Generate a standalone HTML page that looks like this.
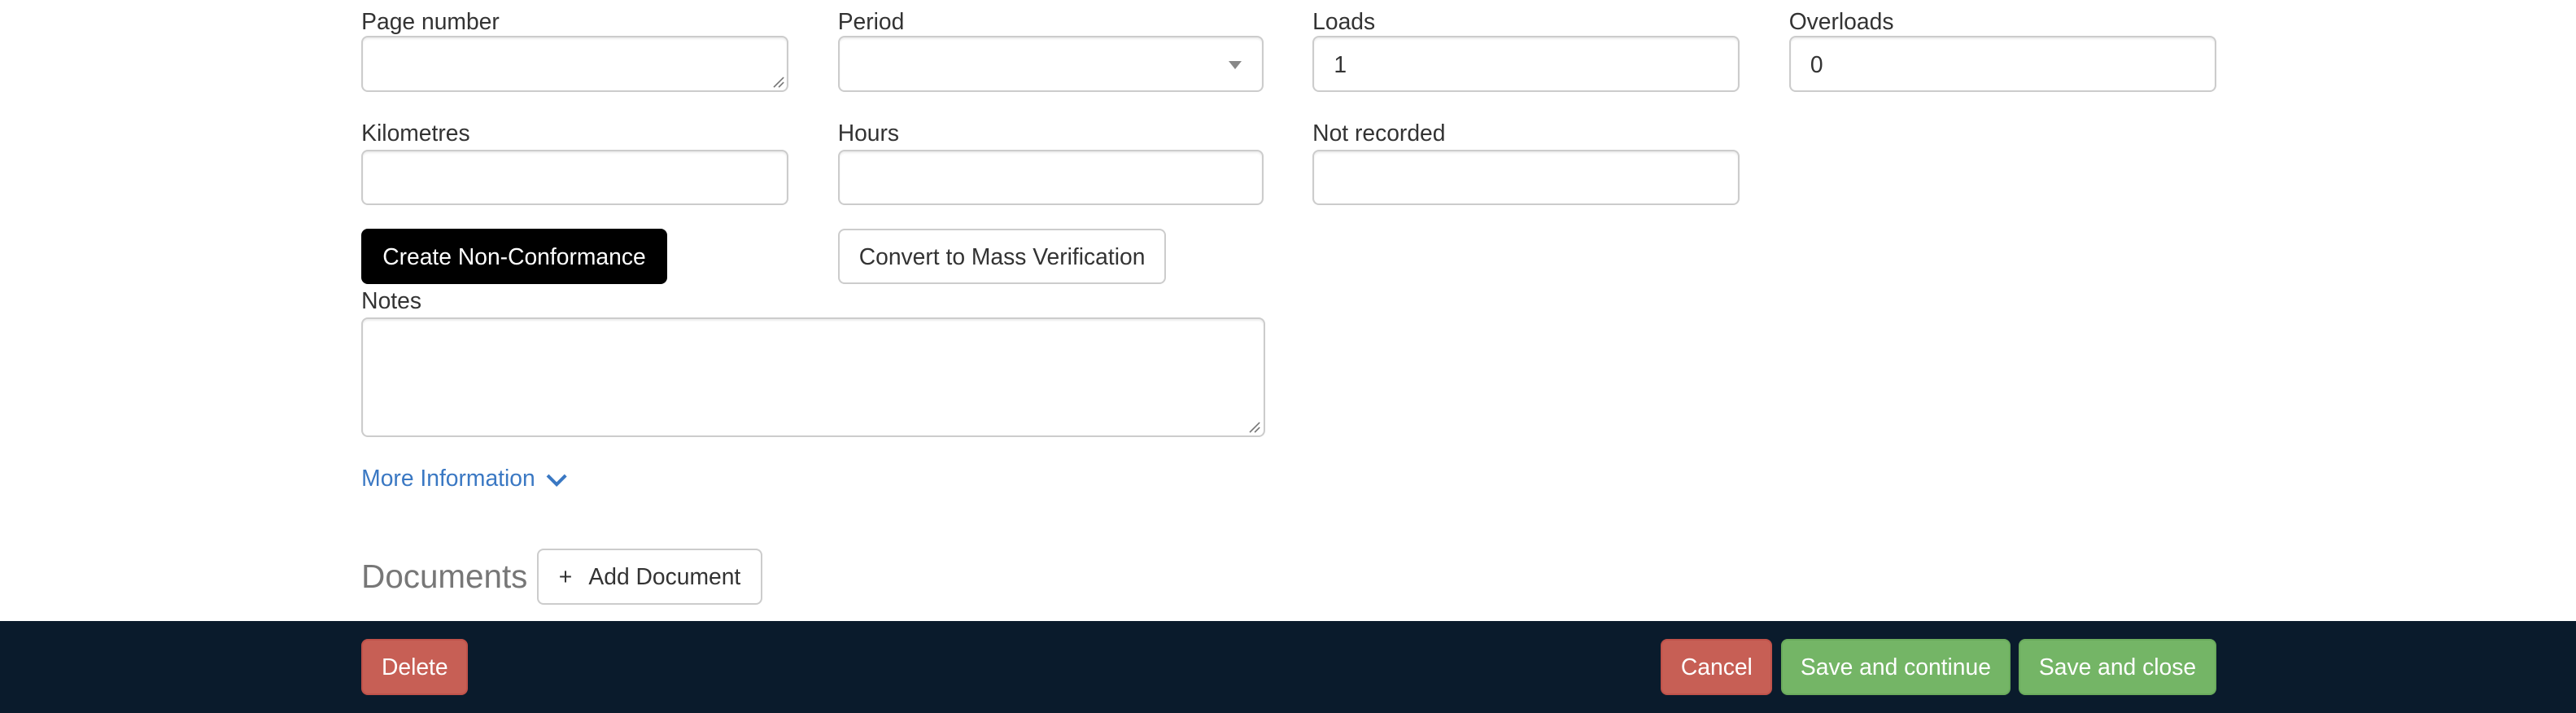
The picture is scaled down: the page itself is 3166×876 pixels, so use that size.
<!DOCTYPE html>
<html><head><meta charset="utf-8"><style>
html,body{margin:0;padding:0;background:#fff;}
body{zoom:2.019;width:1568px;height:434px;position:relative;overflow:hidden;font-family:"Liberation Sans",Arial,sans-serif;font-size:14px;color:#333;}
.a{position:absolute;}
.lbl{position:absolute;font-size:14px;line-height:16px;color:#333;}
.inp{position:absolute;box-sizing:border-box;border:1px solid #ccc;border-radius:4px;background:#fff;box-shadow:inset 0 1px 1px rgba(0,0,0,.075);width:260px;height:34px;padding:8px 12px;font-size:14px;line-height:16px;}
.btn{position:absolute;box-sizing:border-box;border-radius:4px;height:34px;line-height:32px;text-align:center;font-size:14px;}
</style></head><body>
<div class="lbl" style="left:220px;top:5px">Page number</div>
<div class="inp" style="left:220px;top:22px">
<svg class="a" style="right:1px;bottom:1px" width="8" height="8"><path d="M7 1L1 7M7 4L4 7" stroke="#777" stroke-width="0.8"/></svg></div>
<div class="lbl" style="left:510px;top:5px">Period</div>
<div class="inp" style="left:510px;top:22px;width:259px"><div class="a" style="right:12px;top:14px;width:0;height:0;border-left:4px solid transparent;border-right:4px solid transparent;border-top:5px solid #888"></div></div>
<div class="lbl" style="left:799px;top:5px">Loads</div>
<div class="inp" style="left:799px;top:22px">1</div>
<div class="lbl" style="left:1089px;top:5px">Overloads</div>
<div class="inp" style="left:1089px;top:22px">0</div>

<div class="lbl" style="left:220px;top:73px">Kilometres</div>
<div class="inp" style="left:220px;top:91px"></div>
<div class="lbl" style="left:510px;top:73px">Hours</div>
<div class="inp" style="left:510px;top:91px;width:259px"></div>
<div class="lbl" style="left:799px;top:73px">Not recorded</div>
<div class="inp" style="left:799px;top:91px"></div>

<div class="btn" style="left:220px;top:139px;width:186px;background:#000;color:#fff;border:1px solid #000">Create Non-Conformance</div>
<div class="btn" style="left:510px;top:139px;width:200px;background:#fff;color:#333;border:1px solid #ccc">Convert to Mass Verification</div>

<div class="lbl" style="left:220px;top:175px">Notes</div>
<div class="inp" style="left:220px;top:193px;width:550px;height:73px">
<svg class="a" style="right:1px;bottom:1px" width="8" height="8"><path d="M7 1L1 7M7 4L4 7" stroke="#777" stroke-width="0.8"/></svg></div>

<div class="a" style="left:220px;top:283px;color:#3a78c3;font-size:14px;line-height:16px">More Information
<svg style="vertical-align:middle;margin-left:2px" width="14" height="10"><path d="M1.5 2L7 7.5L12.5 2" fill="none" stroke="#3a78c3" stroke-width="2"/></svg></div>

<div class="a" style="left:220px;top:340px;font-size:20px;line-height:22px;color:#777">Documents</div>
<div class="btn" style="left:327px;top:334px;width:137px;background:#fff;color:#333;border:1px solid #ccc"><span style="margin-right:10px">+</span>Add Document</div>

<div class="a" style="left:0;top:378px;width:1568px;height:56px;background:#0a1b2c"></div>
<div class="btn" style="left:220px;top:389px;width:65px;background:#c75f55;color:#fff;border:1px solid #c0524a">Delete</div>
<div class="btn" style="left:1011px;top:389px;width:68px;background:#c75f55;color:#fff;border:1px solid #c0524a">Cancel</div>
<div class="btn" style="left:1084px;top:389px;width:140px;background:#74b566;color:#fff;border:1px solid #6aab5c">Save and continue</div>
<div class="btn" style="left:1229px;top:389px;width:120px;background:#74b566;color:#fff;border:1px solid #6aab5c">Save and close</div>
</body></html>
